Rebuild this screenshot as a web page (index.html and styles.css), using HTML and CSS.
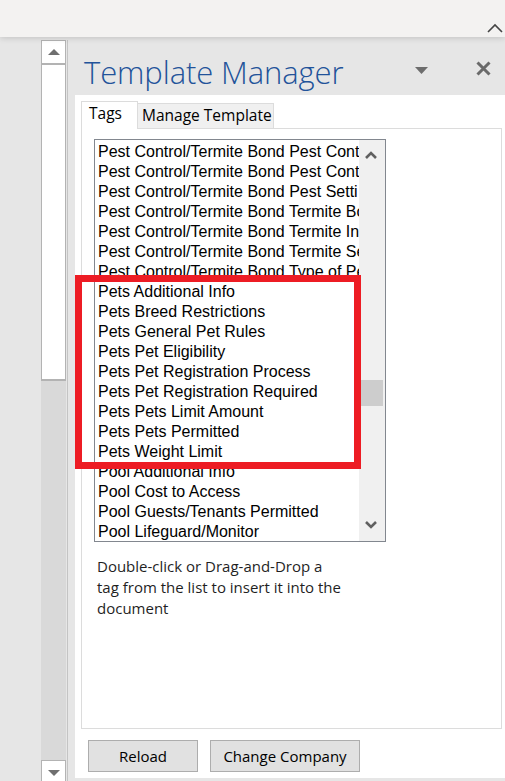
FILE: index.html
```html
<!DOCTYPE html>
<html lang="en">
<head>
<meta charset="utf-8">
<title>Template Manager</title>
<link rel="stylesheet" href="styles.css">
</head>
<body>
<div class="topbar">
  <svg class="collapse" width="16" height="10" viewBox="0 0 16 10"><path d="M1 9 L8 2 L15 9" fill="none" stroke="#444" stroke-width="1.6"/></svg>
</div>
<div class="main">
  <div class="vscroll">
    <div class="sb-btn sb-up"><svg width="12" height="6" viewBox="0 0 12 6"><path d="M0 6 L6 0 L12 6 Z" fill="#6f6f6f"/></svg></div>
    <div class="sb-thumb"></div>
    <div class="sb-track"></div>
    <div class="sb-btn sb-down"><svg width="12" height="6" viewBox="0 0 12 6"><path d="M0 0 L6 6 L12 0 Z" fill="#6f6f6f"/></svg></div>
  </div>
  <div class="divider"></div>
  <div class="pane">
    <div class="pane-head">
      <h1 class="title">Template Manager</h1>
      <svg class="menu-arrow" width="13" height="7" viewBox="0 0 13 7"><path d="M0 0 L13 0 L6.5 7 Z" fill="#6d6d6d"/></svg>
      <svg class="close" width="15" height="15" viewBox="0 0 15 15"><path d="M1.5 1.5 L13.5 13.5 M13.5 1.5 L1.5 13.5" stroke="#6a6a6a" stroke-width="3"/></svg>
    </div>
    <div class="panel">
      <div class="tabs">
        <div class="tab tab-active">Tags</div>
        <div class="tab tab-manage">Manage Template</div>
      </div>
      <div class="tabpage">
        <div class="listbox">
          <ul class="items">
            <li>Pest Control/Termite Bond Pest Cont</li>
            <li>Pest Control/Termite Bond Pest Cont</li>
            <li>Pest Control/Termite Bond Pest Setti</li>
            <li>Pest Control/Termite Bond Termite Bo</li>
            <li>Pest Control/Termite Bond Termite In</li>
            <li>Pest Control/Termite Bond Termite Se</li>
            <li>Pest Control/Termite Bond Type of Pe</li>
            <li>Pets Additional Info</li>
            <li>Pets Breed Restrictions</li>
            <li>Pets General Pet Rules</li>
            <li>Pets Pet Eligibility</li>
            <li>Pets Pet Registration Process</li>
            <li>Pets Pet Registration Required</li>
            <li>Pets Pets Limit Amount</li>
            <li>Pets Pets Permitted</li>
            <li>Pets Weight Limit</li>
            <li>Pool Additional Info</li>
            <li>Pool Cost to Access</li>
            <li>Pool Guests/Tenants Permitted</li>
            <li>Pool Lifeguard/Monitor</li>
          </ul>
          <div class="lb-scroll">
            <div class="lb-arrow"><svg width="12" height="8" viewBox="0 0 12 8"><path d="M1 7 L6 2 L11 7" fill="none" stroke="#606060" stroke-width="2.6"/></svg></div>
            <div class="lb-track"></div>
            <div class="lb-arrow lb-arrow-down"><svg width="12" height="8" viewBox="0 0 12 8"><path d="M1 1 L6 6 L11 1" fill="none" stroke="#606060" stroke-width="2.6"/></svg></div>
            <div class="lb-thumb"></div>
          </div>
        </div>
        <p class="help">Double-click or Drag-and-Drop a<br>tag from the list to insert it into the<br>document</p>
        <div class="highlight"></div>
      </div>
      <div class="buttons">
        <button class="btn btn-reload">Reload</button>
        <button class="btn btn-company">Change Company</button>
      </div>
    </div>
  </div>
</div>
</body>
</html>
```

FILE: styles.css
```css
* { box-sizing: border-box; }

html, body {
  margin: 0;
  padding: 0;
}

body {
  width: 505px;
  height: 781px;
  overflow: hidden;
  background: #e6e6e6;
  font-family: "Open Sans", "Noto Sans", sans-serif;
}

.topbar {
  position: relative;
  z-index: 2;
  height: 37px;
  background: #f3f2f1;
  box-shadow: 0 1px 6px rgba(0, 0, 0, 0.16);
  display: flex;
  justify-content: flex-end;
  align-items: flex-start;
  padding: 23px 2px 0 0;
}

.main {
  display: flex;
  height: 744px;
  padding-left: 41px;
}

/* left document scrollbar */
.vscroll {
  width: 25px;
  margin-top: 3px;
  display: flex;
  flex-direction: column;
}

.sb-btn {
  background: #fff;
  border: 1px solid #b3b3b3;
  display: flex;
  justify-content: center;
}

.sb-up {
  height: 25px;
  border-bottom-width: 2px;
  padding-top: 8px;
}

.sb-thumb {
  height: 316px;
  background: #fff;
  border: 1px solid #b3b3b3;
  border-top: none;
  border-bottom-width: 2px;
}

.sb-track {
  flex: 1;
  background: #d9d9d9;
}

.sb-down {
  height: 21px;
  border-bottom: none;
  padding-top: 9px;
}

.divider {
  width: 1px;
  margin-left: 1px;
  margin-top: 3px;
  background: #c4c4c4;
}

.pane {
  flex: 1;
  display: flex;
  flex-direction: column;
}

.pane-head {
  height: 58px;
  display: flex;
  align-items: flex-start;
  padding-left: 16px;
}

.title {
  margin: 0;
  font-family: "Open Sans", sans-serif;
  font-weight: 300;
  font-size: 31px;
  line-height: 40px;
  margin-top: 15px;
  color: #22539a;
  letter-spacing: -0.1px;
  flex: 1;
}

.menu-arrow {
  margin-top: 30px;
  margin-right: 48px;
}

.close {
  margin-top: 24px;
  margin-right: 14px;
}

.panel {
  margin-left: 7px;
  height: 683px;
  background: #fff;
  padding: 6px 3px 0 6px;
}

.tabs {
  display: flex;
  align-items: flex-end;
  margin-bottom: -1px;
  font-size: 15.5px;
  color: #000;
}

.tab {
  height: 26px;
  line-height: 23px;
  background: #f0f0f0;
  border: 1px solid #dcdcdc;
  border-left: none;
  position: relative;
  white-space: nowrap;
}

.tab-manage {
  width: 136px;
  padding-left: 4px;
}

.tab-active {
  height: 28px;
  width: 57px;
  padding-left: 7px;
  line-height: 22px;
  background: #fff;
  border-left: 1px solid #dcdcdc;
  border-bottom: none;
  z-index: 1;
}

.tabpage {
  position: relative;
  height: 601px;
  border: 1px solid #dcdcdc;
  padding: 10px 0 0 12px;
}

.listbox {
  width: 292px;
  height: 403px;
  border: 1px solid #82878f;
  display: flex;
}

.items {
  flex: 1;
  margin: 0;
  padding: 2px 0 0 0;
  list-style: none;
  overflow: hidden;
  font-family: "Liberation Sans", Arial, sans-serif;
  font-size: 16px;
  color: #000;
}

.items li {
  height: 20px;
  line-height: 20px;
  padding-left: 3px;
  white-space: nowrap;
}

.lb-scroll {
  position: relative;
  width: 26px;
  background: #f0f0f0;
  display: flex;
  flex-direction: column;
}

.lb-arrow {
  height: 26px;
  display: flex;
  justify-content: center;
  padding: 11px 2px 0 0;
}

.lb-arrow-down {
  padding-top: 0;
  height: 20px;
}

.lb-track {
  flex: 1;
}

.lb-thumb {
  position: absolute;
  left: 1px;
  right: 2px;
  top: 240px;
  height: 26px;
  background: #cdcdcd;
}

.help {
  margin: 14px 0 0 3px;
  font-size: 15px;
  line-height: 21px;
  color: #1f1f1f;
}

.highlight {
  position: absolute;
  left: -7px;
  top: 146px;
  width: 286px;
  height: 194px;
  border: 7px solid #ed1c24;
}

.buttons {
  display: flex;
  gap: 12px;
  margin: 11px 0 0 7px;
}

.btn {
  height: 32px;
  background: #e1e1e1;
  border: 1px solid #adadad;
  font-family: "Open Sans", sans-serif;
  font-size: 15px;
  color: #000;
  padding: 0;
}

.btn-reload { width: 110px; }
.btn-company { width: 150px; }
```
